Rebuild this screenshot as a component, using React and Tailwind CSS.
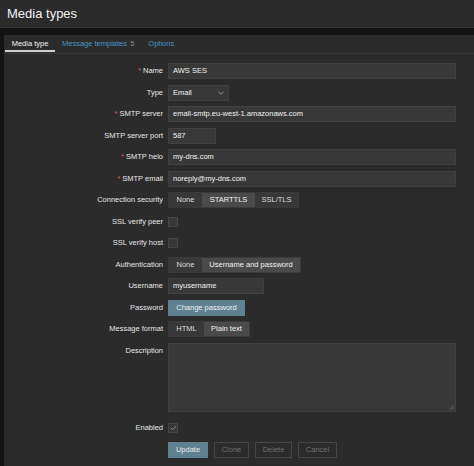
import React from "react";

const font = { fontFamily: '"Liberation Sans", Arial, sans-serif' };

const Label = ({ children, required }) => (
  <div className="w-[164px] shrink-0 pr-[5px] text-right text-[7.5px] text-[#e6e6e6] leading-4">
    {required && <span className="text-[#e45959] mr-[2px]">*</span>}
    {children}
  </div>
);

const Input = ({ value, w = "w-[288px]" }) => (
  <div className={`${w} h-4 bg-[#383838] border border-[#404040] px-[4px] text-[7.5px] leading-[14px] text-[#f2f2f2] truncate`}>
    {value}
  </div>
);

const Segmented = ({ options, active }) => (
  <div className="flex h-4 bg-[#383838] border border-[#3a3a3a]">
    {options.map((o) => (
      <div
        key={o.label}
        className={`${o.w} text-center text-[7.5px] leading-[14px] ${
          o.label === active ? "bg-[#4a4a4a] text-[#f2f2f2]" : "text-[#dcdcdc]"
        }`}
      >
        {o.label}
      </div>
    ))}
  </div>
);

const Checkbox = ({ checked }) => (
  <div className="w-[10px] h-[10px] bg-[#383838] border border-[#454545] flex items-center justify-center">
    {checked && (
      <svg width="7" height="6" viewBox="0 0 7 6">
        <path d="M0.8 3 L2.7 4.8 L6.2 1" stroke="#8a8a8a" strokeWidth="1" fill="none" />
      </svg>
    )}
  </div>
);

const Row = ({ label, required, children }) => (
  <div className="flex items-center h-4">
    <Label required={required}>{label}</Label>
    {children}
  </div>
);

export default function App() {
  return (
    <div className="w-[474px] h-[466px] bg-[#121212] overflow-hidden" style={font}>
      <div className="h-[28px] bg-[#2b2b2b] border-b border-[#333] px-[7px] flex items-center">
        <h1 className="text-[13px] text-[#f2f2f2] leading-none">Media types</h1>
      </div>
      <div className="ml-[4px] mt-[7px] h-[431px] bg-[#2b2b2b]">
        <div className="flex h-[19px] border-b border-[#383838] text-[7.5px] items-center">
          <div className="relative h-full w-[50px] ml-[1px] flex items-center justify-center text-[#f2f2f2]">
            Media type
            <div className="absolute left-0 right-0 bottom-[1px] h-[2px] bg-[#d0d0d0]" />
          </div>
          <div className="ml-[7px] text-[#4796c4]">
            Message templates <span className="text-[#8a8a8a] ml-[1px]">5</span>
          </div>
          <div className="ml-[14px] text-[#4796c4]">Options</div>
        </div>

        <div className="pt-[9px] flex flex-col gap-[5.5px]">
          <Row label="Name" required>
            <Input value="AWS SES" />
          </Row>
          <Row label="Type">
            <div className="w-[61px] h-4 bg-[#383838] border border-[#404040] px-[4px] flex items-center justify-between text-[7.5px] text-[#f2f2f2]">
              Email
              <svg width="6" height="4" viewBox="0 0 6 4">
                <path d="M0.5 0.8 L3 3.2 L5.5 0.8" stroke="#9a9a9a" strokeWidth="0.9" fill="none" />
              </svg>
            </div>
          </Row>
          <Row label="SMTP server" required>
            <Input value="email-smtp.eu-west-1.amazonaws.com" />
          </Row>
          <Row label="SMTP server port">
            <Input value="587" w="w-[48px]" />
          </Row>
          <Row label="SMTP helo" required>
            <Input value="my-dns.com" />
          </Row>
          <Row label="SMTP email" required>
            <Input value="noreply@my-dns.com" />
          </Row>
          <Row label="Connection security">
            <Segmented
              active="STARTTLS"
              options={[
                { label: "None", w: "w-[33px]" },
                { label: "STARTTLS", w: "w-[53px]" },
                { label: "SSL/TLS", w: "w-[43px]" },
              ]}
            />
          </Row>
          <Row label="SSL verify peer">
            <Checkbox />
          </Row>
          <Row label="SSL verify host">
            <Checkbox />
          </Row>
          <Row label="Authentication">
            <Segmented
              active="Username and password"
              options={[
                { label: "None", w: "w-[33px]" },
                { label: "Username and password", w: "w-[98px]" },
              ]}
            />
          </Row>
          <Row label="Username">
            <Input value="myusername" w="w-[96px]" />
          </Row>
          <Row label="Password">
            <div className="w-[77px] h-4 bg-[#5f8192] text-center text-[7.5px] leading-4 text-[#f0f0f0]">
              Change password
            </div>
          </Row>
          <Row label="Message format">
            <Segmented
              active="Plain text"
              options={[
                { label: "HTML", w: "w-[35px]" },
                { label: "Plain text", w: "w-[45px]" },
              ]}
            />
          </Row>
          <div className="flex">
            <Label>Description</Label>
            <div className="relative w-[288px] h-[69px] bg-[#383838] border border-[#404040]">
              <svg className="absolute right-[1px] bottom-[1px]" width="5" height="5" viewBox="0 0 5 5">
                <path d="M1 4.5 L4.5 1 M3 4.5 L4.5 3" stroke="#777" strokeWidth="0.8" />
              </svg>
            </div>
          </div>
          <div className="mt-[3px]">
            <Row label="Enabled">
              <Checkbox checked />
            </Row>
          </div>
          <div className="flex">
            <div className="w-[164px] shrink-0" />
            <div className="flex gap-[6px] text-[7.5px]">
              <div className="w-[40px] h-4 bg-[#5f8192] text-[#e8e8e8] text-center leading-4">Update</div>
              <div className="w-[35px] h-4 border border-[#454545] text-[#6f6f6f] text-center leading-[14px]">Clone</div>
              <div className="w-[37px] h-4 border border-[#454545] text-[#6f6f6f] text-center leading-[14px]">Delete</div>
              <div className="w-[39px] h-4 border border-[#454545] text-[#6f6f6f] text-center leading-[14px]">Cancel</div>
            </div>
          </div>
        </div>
      </div>
    </div>
  );
}
